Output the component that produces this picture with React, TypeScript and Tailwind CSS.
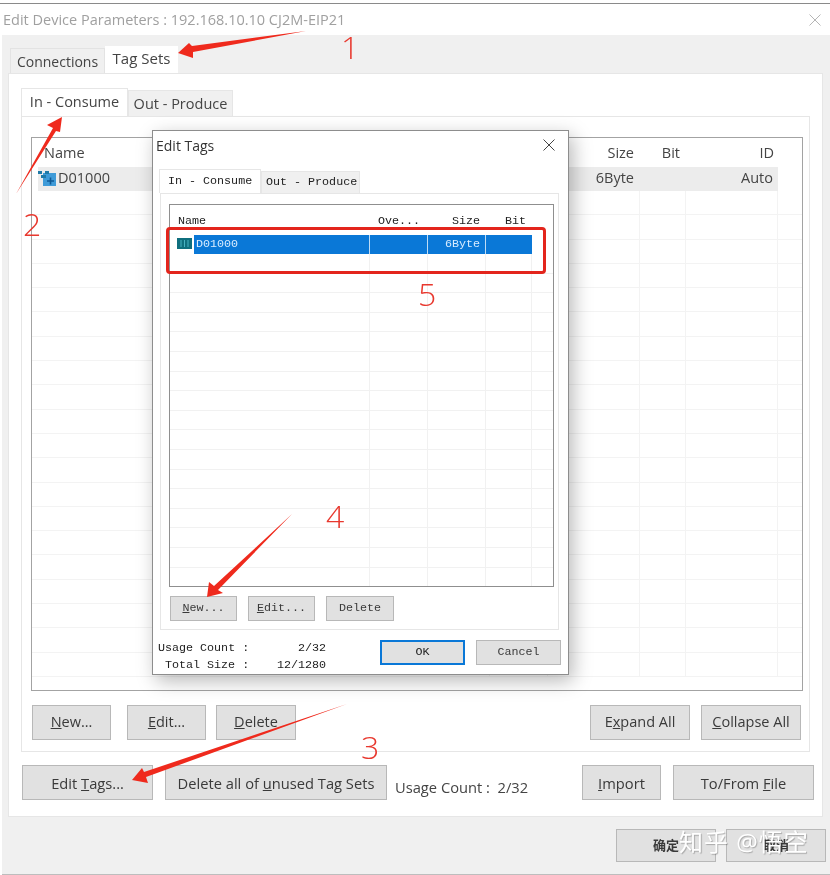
const ui = { fontFamily: '"Open Sans", "Noto Sans", "Noto Sans CJK SC", sans-serif' }
const mono = { fontFamily: '"Liberation Mono", "Noto Sans CJK SC", monospace' }

function Btn({ className, children }: { className: string; children: React.ReactNode }) {
  return (
    <div className={`flex items-center justify-center bg-[#e1e1e1] border border-[#b8b8b8] text-[#3a3a3a] ${className}`}>
      {children}
    </div>
  )
}

function MainList() {
  const cols = ['w-[458px]', 'w-[58px]', 'w-[92px]', 'w-[46px]', 'w-[92px]']
  const rows = Array.from({ length: 20 })
  return (
    <div className="mt-[20px] ml-[9px] w-[772px] h-[554px] border border-[#a3a3a3] overflow-hidden text-[14.5px] text-[#444]">
      <div className="flex h-[29px] items-center bg-white">
        <div className="w-[459px] pl-[12px]">Name</div>
        <div className="w-[58px]" />
        <div className="w-[92px] text-right pr-[7px]">Size</div>
        <div className="w-[46px] text-right pr-[7px]">Bit</div>
        <div className="w-[92px] text-right pr-[5px]">ID</div>
      </div>
      <div className="flex h-[24px] items-center ml-[6px] w-[740px] bg-[#ececec] pb-[2px]">
        <div className="w-[453px] pl-[20px]">D01000</div>
        <div className="w-[58px]" />
        <div className="w-[92px] text-right pr-[7px]">6Byte</div>
        <div className="w-[46px]" />
        <div className="w-[91px] text-right pr-[5px]">Auto</div>
      </div>
      {rows.map((_, i) => (
        <div key={i} className="flex h-[24.3px] border-b border-[#f3f3f3]">
          <div className={`${cols[0]} border-r border-[#f3f3f3]`} />
          <div className={`${cols[1]} border-r border-[#f3f3f3]`} />
          <div className={`${cols[2]} border-r border-[#f3f3f3]`} />
          <div className={`${cols[3]} border-r border-[#f3f3f3]`} />
          <div className={`${cols[4]} border-r border-[#f3f3f3]`} />
        </div>
      ))}
    </div>
  )
}

function EditTagsDialog() {
  const rows = Array.from({ length: 17 })
  return (
    <div
      className="absolute left-[152px] top-[130px] w-[417px] h-[545px] bg-white border border-[#8d8d8d] shadow-[4px_6px_18px_rgba(0,0,0,0.28)] text-[#222]"
      style={mono}
    >
      <div className="flex h-[30px] items-center justify-between pl-[3px] pr-[13px] pb-[2px] text-[14px] text-[#333]" style={ui}>
        <span>Edit Tags</span>
        <svg width="12" height="12" viewBox="0 0 12 12" stroke="#444" strokeWidth="1" fill="none">
          <path d="M0.5 0.5 L11.5 11.5 M11.5 0.5 L0.5 11.5" />
        </svg>
      </div>
      <div className="flex ml-[6px] mt-[8px] h-[24px] items-end text-[11.7px]">
        <div className="w-[102px] h-[24px] pl-[8px] flex items-center bg-white border border-b-0 border-[#e6e6e6]">In - Consume</div>
        <div className="w-[99px] h-[22px] pl-[4px] flex items-center bg-[#f0f0f0] border border-b-0 border-[#e6e6e6]">Out - Produce</div>
      </div>
      <div className="ml-[7px] w-[399px] h-[437px] border border-[#e6e6e6] pt-[10px] pl-[8px]">
        <div className="w-[385px] h-[383px] border border-[#8f8f8f] overflow-hidden text-[11.7px]">
          <div className="flex h-[29px] items-end pb-[3px]">
            <div className="w-[200px] pl-[8px]">Name</div>
            <div className="w-[59px] pl-[8px]">Ove...</div>
            <div className="w-[58px] pr-[7px] text-right">Size</div>
            <div className="w-[46px] pr-[7px] text-right">Bit</div>
          </div>
          <div className="flex h-[19px] mt-[1px] ml-[24px] w-[338px] bg-[#0a78d7] text-[#d8ecff] items-center">
            <div className="w-[176px] pl-[2px] border-r border-[#bfdcf5] h-full flex items-center">D01000</div>
            <div className="w-[58px] border-r border-[#bfdcf5] h-full" />
            <div className="w-[58px] pr-[5px] text-right border-r border-[#bfdcf5] h-full flex items-center justify-end">6Byte</div>
          </div>
          {rows.map((_, i) => (
            <div key={i} className="flex h-[19.6px] border-b border-[#f1f1f1]">
              <div className="w-[200px] border-r border-[#f1f1f1]" />
              <div className="w-[58px] border-r border-[#f1f1f1]" />
              <div className="w-[58px] border-r border-[#f1f1f1]" />
              <div className="w-[46px] border-r border-[#f1f1f1]" />
            </div>
          ))}
        </div>
        <div className="flex mt-[9px] ml-[1px] text-[11.7px]">
          <Btn className="w-[67px] h-[25px]"><span><u>N</u>ew...</span></Btn>
          <Btn className="w-[67px] h-[25px] ml-[11px]"><span><u>E</u>dit...</span></Btn>
          <Btn className="w-[68px] h-[25px] ml-[11px]">Delete</Btn>
        </div>
      </div>
      <div className="flex mt-[10px]">
        <div className="w-[227px] pl-[5px] text-[11.7px] leading-[17px] whitespace-nowrap">
          <div className="flex"><span className="w-[100px]">Usage Count :</span><span className="w-[68px] text-right">2/32</span></div>
          <div className="flex"><span className="w-[100px] pl-[7px]">Total Size :</span><span className="w-[68px] text-right">12/1280</span></div>
        </div>
        <div className="w-[85px] h-[25px] flex items-center justify-center bg-[#e1e1e1] border-2 border-[#0a78d7] text-[11.7px]">OK</div>
        <Btn className="w-[85px] h-[25px] ml-[11px] text-[11.7px]">Cancel</Btn>
      </div>
    </div>
  )
}

function Annotations() {
  return (
    <>
      <svg className="absolute left-0 top-0" width="830" height="875" viewBox="0 0 830 875">
        <g fill="#ef2a1d">
          <polygon points="306,31 192,46 189,43 178,53 193,58 193,52" />
          <polygon points="16,194 53,128 47,125 62,117 60,132 56,131" />
          <polygon points="347,704 144,772 142,768 132,780 148,783 146,777" />
          <polygon points="292,514 214,586 209,582 207,597 223,593 218,590" />
        </g>
        {/* main list row icon */}
        <rect x="43" y="173" width="13" height="13" fill="#3f9bd8" />
        <path d="M38 171 h4 v3 h-4 z M41 175 h5 v3 h-5 z M45 171 h4 v3 h-4 z" fill="#1f7aa8" />
        <path d="M47 181 h7 M50.500 177.500 v7" stroke="#0f5a96" strokeWidth="1.600" />
        {/* dialog row icon */}
        <rect x="177" y="238" width="15" height="11" fill="#0f6f7e" />
        <path d="M181 240 v7 M184.500 240 v7 M188 240 v7" stroke="#49b3c2" strokeWidth="1" />
      </svg>
      <div className="absolute left-[166px] top-[227px] w-[380px] h-[47px] border-[3px] border-[#e3251c] rounded-[4px]" />
      <span className="absolute left-[341px] top-[26px] text-[32px] leading-[42px] font-light text-[#e8382e]">1</span>
      <span className="absolute left-[23px] top-[203px] text-[32px] leading-[42px] font-light text-[#e8382e]">2</span>
      <span className="absolute left-[361px] top-[726px] text-[32px] leading-[42px] font-light text-[#e8382e]">3</span>
      <span className="absolute left-[326px] top-[495px] text-[32px] leading-[42px] font-light text-[#e8382e]">4</span>
      <span className="absolute left-[418px] top-[273px] text-[32px] leading-[42px] font-light text-[#e8382e]">5</span>
      <span className="absolute left-[679px] top-[824px] text-[24px] leading-[36px] text-white [text-shadow:1px_1px_1px_rgba(0,0,0,0.25)] tracking-[1px] whitespace-nowrap">知乎 @悟空</span>
    </>
  )
}

export default function App() {
  return (
    <div className="relative w-[830px] h-[875px] bg-white overflow-hidden flex flex-col blur-[0.35px]" style={ui}>
      <div className="h-[3px] shrink-0 bg-white" />
      <div className="h-[1px] shrink-0 bg-[#8a8a8a]" />
      <div className="h-[31px] shrink-0 flex items-center justify-between pl-[3px] pr-[9px] text-[14.5px] text-[#a0a0a0]">
        <span>Edit Device Parameters : 192.168.10.10 CJ2M-EIP21</span>
        <svg width="12" height="12" viewBox="0 0 12 12" stroke="#b5b5b5" strokeWidth="1" fill="none">
          <path d="M0.5 0.5 L11.5 11.5 M11.5 0.5 L0.5 11.5" />
        </svg>
      </div>

      <div className="flex-1 ml-[2px] bg-[#f0f0f0] border-b border-[#bdbdbd] flex flex-col">
        <div className="flex h-[38px] items-end ml-[8px] text-[14px] text-[#444] shrink-0">
          <div className="w-[95px] h-[25px] flex items-center justify-center bg-[#f0f0f0] border border-b-0 border-[#e3e3e3]">Connections</div>
          <div className="w-[73px] h-[27px] flex items-center justify-center pb-[3px] bg-white text-[15px]">Tag Sets</div>
        </div>

        <div className="ml-[6px] w-[815px] h-[744px] bg-white border border-[#e6e6e6] shrink-0">
          <div className="flex h-[42px] items-end ml-[12px] text-[14.500px] text-[#444]">
            <div className="w-[107px] h-[28px] flex items-center justify-center pb-[2px] bg-white border border-b-0 border-[#e6e6e6]">In - Consume</div>
            <div className="w-[105px] h-[26px] flex items-center justify-center bg-[#f0f0f0] border border-b-0 border-[#e6e6e6]">Out - Produce</div>
          </div>

          <div className="ml-[12px] w-[789px] h-[636px] border border-[#e6e6e6] text-[14px]">
            <MainList />
            <div className="flex mt-[14px] text-[14.5px] leading-[20px]">
              <Btn className="w-[79px] h-[35px] ml-[10px] pb-[2px]"><span><u>N</u>ew...</span></Btn>
              <Btn className="w-[79px] h-[35px] ml-[16px] pb-[2px]"><span><u>E</u>dit...</span></Btn>
              <Btn className="w-[80px] h-[35px] ml-[10px] pb-[2px]"><span><u>D</u>elete</span></Btn>
              <Btn className="w-[100px] h-[35px] ml-[294px] pb-[2px]"><span>E<u>x</u>pand All</span></Btn>
              <Btn className="w-[100px] h-[35px] ml-[11px] pb-[2px]"><span><u>C</u>ollapse All</span></Btn>
            </div>
          </div>

          <div className="flex mt-[13px] ml-[13px] text-[14.7px] leading-[20px]">
            <Btn className="w-[131px] h-[35px]"><span>Edit <u>T</u>ags...</span></Btn>
            <Btn className="w-[222px] h-[35px] ml-[12px]"><span>Delete all of <u>u</u>nused Tag Sets</span></Btn>
            <span className="ml-[8px] mt-[12px] w-[187px] text-[#444] whitespace-nowrap">Usage Count :&nbsp; 2/32</span>
            <Btn className="w-[79px] h-[35px]"><span><u>I</u>mport</span></Btn>
            <Btn className="w-[141px] h-[35px] ml-[12px]"><span>To/From <u>F</u>ile</span></Btn>
          </div>
        </div>

        <div className="flex mt-[12px] ml-[614px] text-[13px] font-semibold">
          <Btn className="w-[100px] h-[33px]">确定</Btn>
          <Btn className="w-[100px] h-[33px] ml-[10px]">取消</Btn>
        </div>
      </div>

      <EditTagsDialog />
      <Annotations />
    </div>
  )
}
